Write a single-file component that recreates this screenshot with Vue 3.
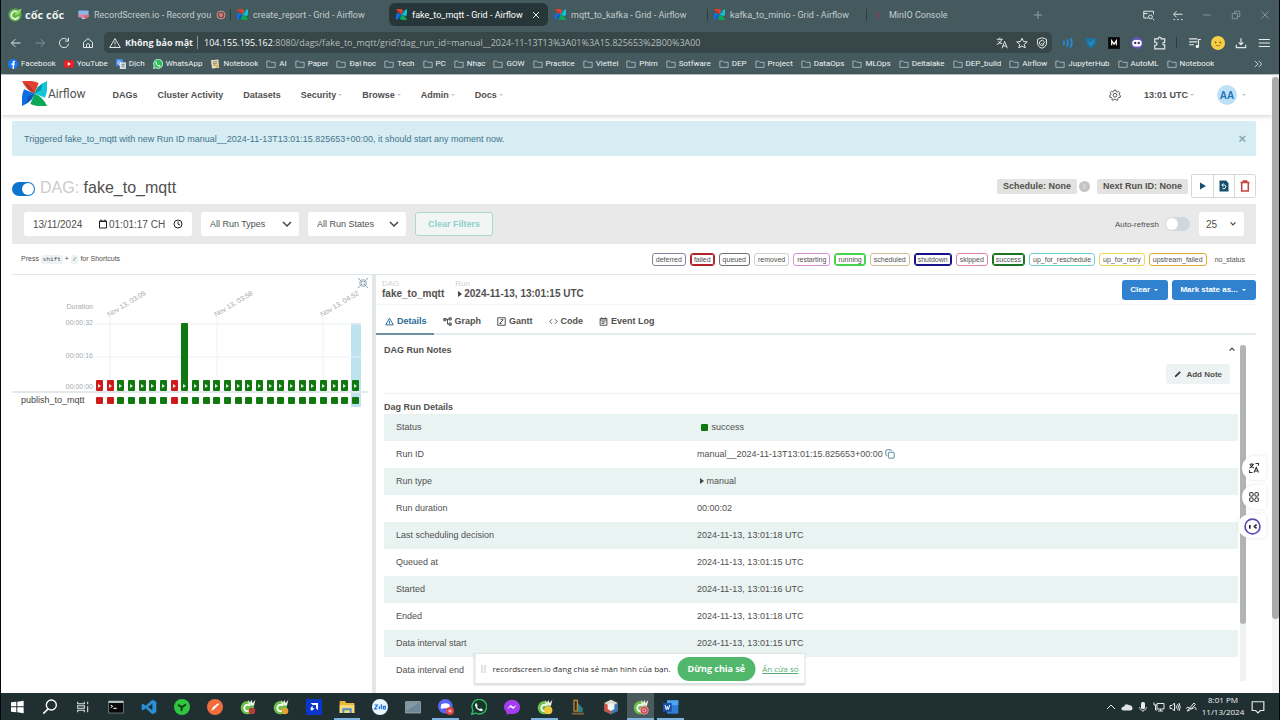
<template>
  <div class="desktop">
    <header class="browser">
      <div class="tab-strip">
        <div class="brand">
          <svg class="brand-icon" viewBox="0 0 14 14">
            <circle cx="7" cy="7" r="6.5" fill="#5fb544" />
            <path d="M10.2 5A3.8 3.8 0 1 0 10.6 8.6" fill="none" stroke="#e6f5df" stroke-width="1.8" />
            <path d="M7 7.5Q8 2.5 13.6 0.6Q13 6 7 7.5Z" fill="#9bdc6c" />
          </svg>
          <span>cốc cốc</span>
        </div>
        <a
          v-for="tab in browserTabs"
          :key="tab.title"
          href="#"
          class="browser-tab"
          :class="{ active: tab.active, divided: tab.divided }"
        >
          <svg class="favicon" viewBox="0 0 24 24" v-html="art[tab.icon]"></svg>
          <span class="browser-tab-title">{{ tab.title }}</span>
          <svg v-if="tab.recording" class="tab-mark" viewBox="0 0 10 10">
            <circle cx="5" cy="5" r="4" fill="none" stroke="#d98c84" />
            <circle cx="5" cy="5" r="2.2" fill="#ee6a5e" />
          </svg>
          <svg v-if="tab.active" class="tab-mark" viewBox="0 0 10 10">
            <path d="M2 2L8 8M8 2L2 8" stroke="#dfe6e6" />
          </svg>
        </a>
        <button class="bare new-tab" aria-label="New tab">
          <svg class="icon-10" viewBox="0 0 10 10"><path d="M5 1V9M1 5H9" stroke="#92a2a4" /></svg>
        </button>
        <div class="window-controls">
          <button v-for="c in windowControls" :key="c.name" class="bare" :aria-label="c.name">
            <svg class="icon-12 line" :class="{ dim: c.dim }" viewBox="0 0 16 16"><path :d="c.d" /></svg>
          </button>
        </div>
      </div>

      <div class="address-row">
        <div class="nav-buttons">
          <button v-for="b in navButtons" :key="b.name" class="bare" :aria-label="b.name">
            <svg class="icon-12 line" :class="{ dim: b.dim }" viewBox="0 0 16 16"><path :d="b.d" /></svg>
          </button>
        </div>
        <div class="address">
          <svg class="icon-12 line" viewBox="0 0 16 16"><path d="M8 2L15 14H1ZM8 6V10M8 11.5V12.8" /></svg>
          <b>Không bảo mật</b>
          <span class="url"><em>104.155.195.162</em>:8080/dags/fake_to_mqtt/grid?dag_run_id=manual__2024-11-13T13%3A01%3A15.825653%2B00%3A00</span>
          <button v-for="a in addressActions" :key="a.name" class="bare" :aria-label="a.name">
            <svg class="icon-12 line" viewBox="0 0 16 16"><path :d="a.d" /></svg>
          </button>
        </div>
        <div class="extensions">
          <button v-for="e in extensions" :key="e" class="bare" :class="e" :aria-label="e">
            <svg class="icon-14" viewBox="0 0 24 24" v-html="art[e]"></svg>
          </button>
        </div>
      </div>

      <nav class="bookmarks">
        <a v-for="(mark, i) in bookmarks" :key="i" href="#">
          <svg class="icon-10" viewBox="0 0 24 24" v-html="art[mark.icon || 'folder']"></svg>
          <span>{{ mark.name }}</span>
        </a>
        <button class="bare more" aria-label="More bookmarks">
          <svg class="icon-10 line" viewBox="0 0 16 16"><path d="M3 3L8 8L3 13M9 3L14 8L9 13" /></svg>
        </button>
      </nav>
    </header>

    <div class="page">
      <div class="document">
        <nav class="navbar">
          <a href="#" class="logo">
            <svg viewBox="0 0 24 24" v-html="art.airflow"></svg>
            <span>Airflow</span>
          </a>
          <a v-for="item in menu" :key="item.name" href="#" class="menu-link">
            {{ item.name }}<i v-if="item.caret" class="caret"></i>
          </a>
          <div class="nav-right">
            <button class="bare" aria-label="Settings">
              <svg class="icon-12 gear" viewBox="0 0 16 16">
                <path d="M6.8 1.5H9.2L9.6 3.4L11.2 4.1L12.9 3.1L14.5 4.9L13.4 6.5L13.9 8.2L15.4 9L14.8 11.2L12.8 11.3L11.7 12.7L12 14.5L9.8 15L8.8 13.4H7.2L6 15L3.9 14.4L4.2 12.5L3.2 11.2L1.2 11L.7 8.8L2.2 8L2.6 6.4L1.6 4.8L3.2 3.1L4.9 4L6.4 3.4Z" />
                <circle cx="8" cy="8.3" r="2.5" />
              </svg>
            </button>
            <a href="#" class="menu-link">13:01 UTC<i class="caret"></i></a>
            <a href="#" class="user"><span class="avatar">AA</span><i class="caret"></i></a>
          </div>
        </nav>

        <main>
          <div class="alert">
            <span>Triggered fake_to_mqtt with new Run ID manual__2024-11-13T13:01:15.825653+00:00, it should start any moment now.</span>
            <button class="bare close" aria-label="Close">×</button>
          </div>

          <div class="title-row">
            <label class="switch">
              <input v-model="dagOn" type="checkbox" aria-label="DAG on">
              <span></span>
            </label>
            <h1><span>DAG:</span> fake_to_mqtt</h1>
            <span class="label">Schedule: None</span>
            <span class="info">i</span>
            <span class="label">Next Run ID: None</span>
            <div class="button-group">
              <button aria-label="Trigger DAG">
                <svg class="icon-12" viewBox="0 0 12 12"><path d="M3 2.5L9 6L3 9.5Z" fill="#17506f" /></svg>
              </button>
              <button aria-label="Reparse DAG">
                <svg class="icon-12" viewBox="0 0 12 12">
                  <path d="M1.5 0.5H8L10.5 3V11.5H1.5Z" fill="#17506f" />
                  <path d="M4 5H6.5A1.9 1.9 0 1 1 4.4 8M5.4 3.4L3.8 5L5.4 6.6" fill="none" stroke="#fff" />
                </svg>
              </button>
              <button aria-label="Delete DAG">
                <svg class="icon-12" viewBox="0 0 12 12">
                  <path d="M1.5 2.5H10.5M4.3 2V1H7.7V2M2.7 3V11H9.3V3" fill="none" stroke="#c9443c" stroke-width="1.5" />
                </svg>
              </button>
            </div>
          </div>

          <div class="filters">
            <div class="datetime">
              <input v-model="filterDate" class="date" type="text" aria-label="Date">
              <svg class="icon-10" viewBox="0 0 10 10"><path d="M1.5 2H8.5V9H1.5ZM1 2.5H9M3 0.5V2M7 0.5V2" fill="none" stroke="#222" /></svg>
              <input v-model="filterTime" class="time" type="text" aria-label="Time">
              <svg class="icon-10" viewBox="0 0 10 10"><circle cx="5" cy="5" r="4" fill="none" stroke="#222" /><path d="M5 2.5V5L7 6" fill="none" stroke="#222" /></svg>
            </div>
            <div class="select">
              <select aria-label="Run types"><option>All Run Types</option></select>
              <svg class="icon-10 chevron" viewBox="0 0 10 10"><path d="M1 3L5 7L9 3" /></svg>
            </div>
            <div class="select">
              <select aria-label="Run states"><option>All Run States</option></select>
              <svg class="icon-10 chevron" viewBox="0 0 10 10"><path d="M1 3L5 7L9 3" /></svg>
            </div>
            <button class="clear-filters">Clear Filters</button>
            <label class="auto-refresh">
              Auto-refresh
              <span class="refresh-toggle"><input v-model="autoRefresh" type="checkbox"><i></i></span>
            </label>
            <div class="select small">
              <select aria-label="Number of runs"><option>25</option></select>
              <svg class="icon-8 chevron" viewBox="0 0 10 10"><path d="M2 3L5 6L8 3" /></svg>
            </div>
          </div>

          <div class="legend">
            <p>Press <kbd>shift</kbd> + <kbd>/</kbd> for Shortcuts</p>
            <span v-for="state in states" :key="state" class="state" :class="state">{{ state }}</span>
          </div>

          <div class="split">
            <section class="grid-panel">
              <svg class="chart" width="360" height="133" viewBox="0 0 360 133">
                <rect class="selected" x="339" y="48" width="10" height="84" />
                <path class="guide" d="M84 49H349M84 82H349M98 42V106M205 42V106M311 42V106" />
                <path class="axis" d="M0 117H356" />
                <text class="tick" x="81" y="34">Duration</text>
                <text class="tick" x="81" y="50">00:00:32</text>
                <text class="tick" x="81" y="83">00:00:16</text>
                <text class="tick" x="81" y="114">00:00:00</text>
                <text
                  v-for="label in dateLabels"
                  :key="label.text"
                  class="date-label"
                  :transform="`translate(${label.x} 42) rotate(-31)`"
                >{{ label.text }}</text>
                <g v-for="run in runs" :key="run.x" :class="run.state">
                  <rect :x="run.x" :y="run.top" width="7" :height="116 - run.top" rx="1" />
                  <path :d="`M${run.x + 2} 109L${run.x + 5} 111L${run.x + 2} 113Z`" fill="#dcecdc" />
                  <rect :x="run.x" y="122" width="7" height="7" rx="1" />
                </g>
                <text class="task" x="9" y="128">publish_to_mqtt</text>
              </svg>
              <button class="bare collapse" aria-label="Collapse">
                <svg class="icon-10" viewBox="0 0 10 10"><path d="M0 0L4 4M4 1V4H1M10 0L6 4M6 1V4H9M0 10L4 6M1 6H4V9M10 10L6 6M9 6H6V9" fill="none" stroke="#8fa3b2" /></svg>
              </button>
            </section>

            <section class="details-panel">
              <div class="run-header">
                <div class="crumb"><small>DAG</small><b>fake_to_mqtt</b></div>
                <div class="crumb"><small>Run</small><b><i class="play"></i>2024-11-13, 13:01:15 UTC</b></div>
                <button class="primary">Clear <i class="caret"></i></button>
                <button class="primary">Mark state as... <i class="caret"></i></button>
              </div>

              <div class="tabs">
                <button
                  v-for="tab in detailTabs"
                  :key="tab.name"
                  :class="{ active: activeTab === tab.name }"
                  @click="activeTab = tab.name"
                >
                  <svg class="tab-icon" viewBox="0 0 12 12"><path :d="tab.d" /></svg>
                  {{ tab.name }}
                </button>
              </div>

              <div class="scroll-area">
                <div class="scroll-content">
                  <div class="notes-head">
                    <h2>DAG Run Notes</h2>
                    <svg class="icon-8 chevron" viewBox="0 0 10 10"><path d="M2 7L5 4L8 7" /></svg>
                  </div>
                  <div class="notes-body">
                    <button class="add-note">
                      <svg class="icon-8" viewBox="0 0 10 10"><path d="M1 9L1.5 7L7 1.5L8.5 3L3 8.5Z" fill="#333" /></svg>
                      Add Note
                    </button>
                  </div>
                  <h2 class="details-title">Dag Run Details</h2>
                  <table>
                    <tbody>
                      <tr v-for="row in details" :key="row.name">
                        <th scope="row">{{ row.name }}</th>
                        <td>
                          <i v-if="row.name === 'Status'" class="status-box"></i>
                          <i v-if="row.name === 'Run type'" class="play type"></i>
                          {{ row.value }}
                          <svg v-if="row.copy" class="copy" viewBox="0 0 12 12">
                            <rect x="4" y="4" width="7" height="7" rx="1" />
                            <path d="M2.5 8H2A1 1 0 0 1 1 7V2A1 1 0 0 1 2 1H7A1 1 0 0 1 8 2V2.5" />
                          </svg>
                        </td>
                      </tr>
                    </tbody>
                  </table>
                </div>
                <div class="inner-bar"><i></i></div>
              </div>
            </section>
          </div>
        </main>
      </div>
      <div class="page-bar"><i></i></div>

      <div class="side-tools">
        <button aria-label="Translate">
          <svg class="icon-12 dark" viewBox="0 0 16 16"><path d="M2 3H8M5 1.5V3M7 3Q6 7 2 8M3 4Q5 7 8 8M8 14L11 7L14 14M9 12H13M10 2H14V5M2 11V14H6" /></svg>
        </button>
        <button aria-label="Apps">
          <svg class="icon-12 dark" viewBox="0 0 16 16"><circle cx="4.5" cy="4.5" r="2.5" /><circle cx="11.5" cy="4.5" r="2.5" /><circle cx="4.5" cy="11.5" r="2.5" /><circle cx="11.5" cy="11.5" r="2.5" /></svg>
        </button>
        <button class="assistant" aria-label="Assistant">
          <svg viewBox="0 0 16 16">
            <circle cx="8" cy="8" r="7" fill="#fff" stroke="#5b4bb5" stroke-width="1.6" />
            <path d="M5.5 6.5V10M11.8 6.3L9.8 8L11.8 9.7" fill="none" stroke="#1d1d33" stroke-width="1.5" />
          </svg>
        </button>
      </div>

      <div class="share-bar">
        <i class="grip"></i>
        <span>recordscreen.io đang chia sẻ màn hình của bạn.</span>
        <button>Dừng chia sẻ</button>
        <a href="#">Ẩn cửa sổ</a>
      </div>
    </div>

    <footer class="taskbar">
      <div class="apps">
        <button v-for="app in apps" :key="app.name" :class="{ open: app.open, current: app.current }" :aria-label="app.name">
          <svg class="app-icon" viewBox="0 0 24 24" v-html="art[app.icon]"></svg>
        </button>
      </div>
      <div class="tray">
        <svg v-for="t in tray" :key="t" class="icon-12" viewBox="0 0 24 24" v-html="art[t]"></svg>
        <div class="clock"><span>8:01 PM</span><span>11/13/2024</span></div>
        <svg class="icon-14" viewBox="0 0 24 24" v-html="art.notice"></svg>
      </div>
    </footer>
  </div>
</template>

<script setup>
import { ref } from 'vue'

const coccoc = '<circle cx="11" cy="13" r="10" fill="#6abf4b"/><path d="M15 10A5 5 0 1 0 15 17" fill="none" stroke="#f3fbef" stroke-width="3"/><path d="M12 1L15 6L17 1L19 6L23 1L21 10L13 9Z" fill="#e8f3df"/>'
const stroke = 'fill="none" stroke="#e4e9e9" stroke-width="2"'

// 图标
const art = {
  airflow: '<path d="M0 0Q10 -1 16 2L12 12Q4 9 0 0Z" fill="#e0402f"/><path d="M24 0Q25 10 22 16L12 12Q15 4 24 0Z" fill="#13c5d6"/><path d="M12 12L15 6L20 2L18 9Z" fill="#0597a9"/><path d="M24 24Q14 25 8 22L12 12Q20 15 24 24Z" fill="#0aa957"/><path d="M0 24Q-1 14 2 8L12 12Q9 20 0 24Z" fill="#0d6fe0"/><path d="M12 12L8 5L3 2L6 8Z" fill="#b8352c"/><path d="M12 12L9 18L4 22L6 15Z" fill="#0b55b5"/>',
  recordscreen: '<rect x="1" y="3" width="22" height="15" rx="2" fill="#8eb6e8"/><rect x="1" y="12" width="22" height="6" fill="#d583a0"/><path d="M8 18H16V22H8Z" fill="#b9c6dd"/><circle cx="17" cy="17" r="4" fill="#e55f66"/>',
  minio: '<path d="M15 2L8 14H12V22L14 20V13L12 12Z" fill="#9c3552"/>',
  folder: '<path d="M2 5H9L12 8H22V20H2Z" fill="none" stroke="#b4c0c1" stroke-width="2"/>',
  facebook: '<circle cx="12" cy="12" r="12" fill="#1877f2"/><path d="M11 24V14H8V10.500H11V8Q11 4 15 4H17V7.500H15.500Q14.500 7.500 14.500 9V10.500H17L16.500 14H14.500V24Z" fill="#fff"/>',
  youtube: '<rect y="3" width="24" height="18" rx="4" fill="#e62127"/><path d="M9 8L17 12L9 16Z" fill="#fff"/>',
  translate: '<rect width="17" height="17" rx="2" fill="#4a88ea"/><rect x="9" y="8" width="15" height="16" rx="2" fill="#d7dde6"/><path d="M11 6A4 4 0 1 0 12 10H8" fill="none" stroke="#fff" stroke-width="2"/><path d="M13 13H21M17 11V13M20 13Q18 19 14 20M14 14Q17 19 21 20" fill="none" stroke="#66788c" stroke-width="1.500"/>',
  whatsapp: '<path d="M1 23L3 17A11 11 0 1 1 7 21Z" fill="#29c259" stroke="#eafbef" stroke-width="2"/><path d="M8 6L10 10L9 12Q11 15 13 15L15 14L18 16Q17 19 14 18Q7 16 6 9Q6 7 8 6Z" fill="#fff"/>',
  notebook: '<path d="M2 3L20 1L22 21L5 23Z" fill="#e9dfbf"/><path d="M6 7L17 6M7 11L18 10M7 15L14 14" stroke="#8a7a55" stroke-width="2"/><circle cx="17" cy="17" r="4" fill="#d7b45a"/>',
  waves: '<path d="M4 8Q7 12 4 16M10 6Q14 12 10 18M16 4Q21 12 16 20" fill="none" stroke="#2789d8" stroke-width="3"/>',
  adblock: '<path d="M3 4H21Q21 17 12 21Q3 17 3 4Z" fill="#1875a8"/><path d="M8 10L12 15L17 8" stroke="#3b94c4" stroke-width="2" fill="none"/>',
  medium: '<rect x="2" y="2" width="20" height="20" fill="#080808"/><path d="M8 16V8L12 14L16 8V16" fill="none" stroke="#fff" stroke-width="2"/>',
  bot: '<circle cx="12" cy="12" r="10" fill="#6a56c9"/><rect x="4" y="7" width="16" height="11" rx="5" fill="#fff"/><circle cx="9" cy="12" r="2" fill="#32245e"/><circle cx="15" cy="12" r="2" fill="#32245e"/>',
  puzzle: `<path d="M3 5H9Q9 1 12 2Q14 2 14 5H20V11Q17 10 17 13Q17 16 20 15V22H3V16Q7 16 7 13Q7 10 3 11Z" ${stroke}/>`,
  playlist: `<path d="M2 5H16M2 10H16M2 15H10M18 18V6H22" ${stroke}/><circle cx="16" cy="18" r="3" fill="#e4e9e9"/>`,
  smiley: '<circle cx="12" cy="12" r="12" fill="#f7cf45"/><circle cx="8" cy="11" r="1.500" fill="#7a5316"/><circle cx="16" cy="11" r="1.500" fill="#7a5316"/><path d="M8 16Q12 18 16 16" fill="none" stroke="#a86f1b" stroke-width="1.500"/>',
  download: `<path d="M12 4V15M8 11L12 15L16 11M4 15V20H20V15" ${stroke}/>`,
  burger: `<path d="M3 6H22M3 12H22M3 18H22" ${stroke}/>`,
  windows: '<path d="M3 5L11 4V11H3ZM12.500 4L22 2.500V11H12.500ZM3 12.500H11V20L3 19ZM12.500 12.500H22V21.500L12.500 20Z" fill="#fff"/>',
  search: '<circle cx="14" cy="9" r="7.500" fill="none" stroke="#fff" stroke-width="2"/><path d="M9 15L2 22" stroke="#fff" stroke-width="2.500"/>',
  taskview: '<path d="M4 4V7H14V4M4 20V17H14V20M4 10H14V14H4ZM19 4V8M19 11V20" fill="none" stroke="#dde3e3" stroke-width="1.600"/>',
  terminal: '<rect x="1" y="3" width="22" height="18" fill="#0a0a0a" stroke="#8d9798"/><rect x="1" y="3" width="22" height="3" fill="#b8c0c1"/><path d="M4 9L7 11L4 13M8 14H13" fill="none" stroke="#fff" stroke-width="1.500"/>',
  vscode: '<path d="M17 1L23 4V20L17 23L7 14L3 17L1 16V8L3 7L7 10ZM17 7L10.500 12L17 17Z" fill="#2a8fd6" fill-rule="evenodd"/>',
  greenapp: '<circle cx="12" cy="12" r="12" fill="#31c63f"/><path d="M6 9L12 12L18 8M12 12L11 18" fill="none" stroke="#0c4a1b" stroke-width="3"/>',
  postman: '<circle cx="12" cy="12" r="12" fill="#f26b3a"/><path d="M6 18L9 12L17 6L18 8L11 15Z" fill="#fff"/>',
  coccocRed: coccoc + '<circle cx="18" cy="18" r="5" fill="#b83a35"/>',
  coccocOrange: coccoc + '<circle cx="18" cy="18" r="5" fill="#e7a02c"/>',
  coccocYellow: coccoc + '<circle cx="17" cy="17" r="6" fill="#f3c53c"/>',
  coccocRec: coccoc + '<circle cx="17" cy="17" r="6" fill="#d33a48" stroke="#f2c6c9"/><circle cx="17" cy="17" r="2.500" fill="none" stroke="#fff"/>',
  blueapp: '<rect width="24" height="24" fill="#0a37c9"/><path d="M7 6H18V17L15 14V9H10ZM7 13L10 10V14H13L10 17H7Z" fill="#fff"/>',
  explorer: '<path d="M1 3H9L11 6H23V21H1Z" fill="#e9b73c"/><rect x="1" y="9" width="22" height="12" fill="#f7da7c"/><path d="M5 14H19V21H16V17H8V21H5Z" fill="#4d8fc4"/>',
  zalo: '<circle cx="12" cy="12" r="12" fill="#e9f3fd"/><path d="M4 9H8L4 15H8M11 11V15M14 8V15M17 11H20V15H17Z" fill="none" stroke="#1273d8" stroke-width="1.800"/>',
  monitor: '<rect x="1" y="4" width="22" height="17" fill="#6f8796" stroke="#aebbc2"/><path d="M2 5H22L2 18Z" fill="#8299a6"/>',
  discord: '<circle cx="11" cy="11" r="11" fill="#5865f2"/><path d="M5 8Q11 5 17 8L18 14L15 15L14 14H8L7 15L4 14Z" fill="#fff"/><circle cx="18" cy="18" r="6" fill="#e0413f"/><path d="M15 18H21M18 15V21" stroke="#fff"/>',
  whatsappDark: '<path d="M1 23L3 17A11 11 0 1 1 7 21Z" fill="#17362c" stroke="#2fbf62" stroke-width="2"/><path d="M8 6L10 10L9 12Q11 15 13 15L15 14L18 16Q17 19 14 18Q7 16 6 9Q6 7 8 6Z" fill="#e9f6ed"/>',
  messenger: '<path d="M12 1C5 1 0 6 0 12Q0 17 4 20V24L8 22Q24 25 24 12C24 6 19 1 12 1Z" fill="#a63df0"/><path d="M5 15L10 9L14 12L19 9L14 15L10 12Z" fill="#fff"/>',
  chart: '<path d="M5 1H12V19H5Z" fill="#c78632"/><path d="M7 3H10V17H7Z" fill="#203032"/><path d="M12 6L19 14V20H12Z" fill="#2f7f83"/><path d="M3 22H21" stroke="#7d6034" stroke-width="3"/>',
  cube: '<path d="M12 1L22 6V18L12 23L2 18V6Z" fill="#5a9e46"/><path d="M12 1L22 6L12 12L2 6Z" fill="#d9dccb"/><path d="M2 6L12 12V23L2 18Z" fill="#cf5147"/><path d="M12 12L22 6V18L12 23Z" fill="#3e77b8"/><path d="M12 6L17 9V15L12 18L7 15V9Z" fill="#f4f4f4"/>',
  word: '<rect x="6" y="2" width="17" height="20" fill="#2f7fd8"/><rect x="6" y="2" width="17" height="7" fill="#53a4ee"/><rect x="0" y="6" width="13" height="13" fill="#1650a8"/><path d="M3 9L5 16L6.500 11L8 16L10 9" fill="none" stroke="#fff" stroke-width="1.500"/>',
  up: `<path d="M4 16L12 8L20 16" ${stroke}/>`,
  cloud: '<path d="M6 19Q0 19 1 14Q2 11 6 11Q9 4 15 8Q22 8 23 14Q23 19 18 19Z" fill="#dfe4e4"/>',
  mic: '<rect x="8" y="2" width="8" height="14" rx="3" fill="#e6eaea"/><path d="M5 12Q5 19 12 19Q19 19 19 12M12 19V22" fill="none" stroke="#b9c2c2" stroke-width="2"/>',
  network: `<path d="M8 5H22V16H8ZM15 16V20M10 20H20M2 3V8H8M5 8V18H8" ${stroke}/>`,
  sound: `<path d="M2 9H6L11 4V20L6 15H2ZM14 9Q16 12 14 15M17 6Q21 12 17 18M20 4Q25 12 20 20" ${stroke}/>`,
  pen: `<path d="M4 20L18 4L21 7L8 19ZM2 15Q6 10 9 14T17 14T22 18" ${stroke}/>`,
  notice: `<path d="M2 3H22V18H16L12 22L8 18H2Z" ${stroke}/>`
}

const browserTabs = [
  { title: 'RecordScreen.io - Record you', icon: 'recordscreen', recording: true },
  { title: 'create_report - Grid - Airflow', icon: 'airflow', divided: true },
  { title: 'fake_to_mqtt - Grid - Airflow', icon: 'airflow', active: true },
  { title: 'mqtt_to_kafka - Grid - Airflow', icon: 'airflow' },
  { title: 'kafka_to_minio - Grid - Airflow', icon: 'airflow', divided: true },
  { title: 'MinIO Console', icon: 'minio', divided: true }
]

const windowControls = [
  { name: 'Search tabs', d: 'M14 7V3H1V12H7M1 6H6M13 13L15 15M12.500 10.500A2.500 2.500 0 1 1 7.500 10.500A2.500 2.500 0 1 1 12.500 10.500' },
  { name: 'Reopen', d: 'M14 7H3M6 3L2 7L6 11M2 14H4M7 14H9M12 14H14' },
  { name: 'Minimize', d: 'M3 8H13', dim: true },
  { name: 'Restore', d: 'M3 6H10V13H3ZM6 6V3H13V10H10', dim: true },
  { name: 'Close', d: 'M3 3L13 13M13 3L3 13', dim: true }
]

const navButtons = [
  { name: 'Back', d: 'M14 8H2M7 3L2 8L7 13' },
  { name: 'Forward', d: 'M2 8H14M9 3L14 8L9 13', dim: true },
  { name: 'Reload', d: 'M13.500 5A6.200 6.200 0 1 0 14.200 9M14 1V5.500H9.500' },
  { name: 'Home', d: 'M2 7L8 2L14 7V14H2ZM6 14V10Q8 7 10 10V14' }
]

const addressActions = [
  { name: 'Translate page', d: 'M1 3H9M5 1V3M8 3Q6 9 1 10M3 5Q5 9 8 9M8 15L11.500 6L15 15M9 12H14' },
  { name: 'Bookmark', d: 'M8 1.500L10 6L15 6.500L11 9.800L12.300 14.500L8 12L3.700 14.500L5 9.800L1 6.500L6 6Z' },
  { name: 'Protection', d: 'M8 1L14 3V8Q14 13 8 15Q2 13 2 8V3ZM11 6A3.500 3.500 0 1 0 11 10M7 8L9 10L12 6' }
]

const extensions = ['waves', 'adblock', 'medium', 'bot', 'puzzle', 'playlist', 'smiley', 'download', 'burger']

const bookmarks = [
  { name: 'Facebook', icon: 'facebook' },
  { name: 'YouTube', icon: 'youtube' },
  { name: 'Dịch', icon: 'translate' },
  { name: 'WhatsApp', icon: 'whatsapp' },
  { name: 'Notebook', icon: 'notebook' },
  { name: 'AI' },
  { name: 'Paper' },
  { name: 'Đại học' },
  { name: 'Tech' },
  { name: 'PC' },
  { name: 'Nhạc' },
  { name: 'GOW' },
  { name: 'Practice' },
  { name: 'Viettel' },
  { name: 'Phim' },
  { name: 'Sotfware' },
  { name: 'DEP' },
  { name: 'Project' },
  { name: 'DataOps' },
  { name: 'MLOps' },
  { name: 'Deltalake' },
  { name: 'DEP_build' },
  { name: 'Airflow' },
  { name: 'JupyterHub' },
  { name: 'AutoML' },
  { name: 'Notebook' }
]

const menu = [
  { name: 'DAGs' },
  { name: 'Cluster Activity' },
  { name: 'Datasets' },
  { name: 'Security', caret: true },
  { name: 'Browse', caret: true },
  { name: 'Admin', caret: true },
  { name: 'Docs', caret: true }
]

const dagOn = ref(true)
const autoRefresh = ref(false)
const filterDate = ref('13/11/2024')
const filterTime = ref('01:01:17 CH')

const states = [
  'deferred', 'failed', 'queued', 'removed', 'restarting', 'running', 'scheduled', 'shutdown',
  'skipped', 'success', 'up_for_reschedule', 'up_for_retry', 'upstream_failed', 'no_status'
]

// 运行记录
const failedRuns = [0, 1, 7]
const runs = Array.from({ length: 25 }, (_, i) => ({
  x: 84 + Math.round((i * 32) / 3),
  top: i === 8 ? 48 : 105,
  state: failedRuns.includes(i) ? 'run-failed' : 'run-success'
}))

const dateLabels = [
  { text: 'Nov 13, 03:05', x: 97 },
  { text: 'Nov 13, 03:58', x: 204 },
  { text: 'Nov 13, 04:52', x: 310 }
]

const activeTab = ref('Details')
const detailTabs = [
  { name: 'Details', d: 'M6 1.500L11 10.500H1ZM6 5V8M6 8.500V9.500' },
  { name: 'Graph', d: 'M1 2H4V5H1ZM8 1H11V4H8ZM8 8H11V11H8ZM4 3H8M6 3V9.500H8M1.500 3.500H3.500M8.500 2.500H10.500M8.500 9.500H10.500' },
  { name: 'Gantt', d: 'M1 1H11V11H1ZM3.500 8.500L8 4M5 3.500H8.500M3.500 8.500H6' },
  { name: 'Code', d: 'M4 3L1 6L4 9M8 3L11 6L8 9' },
  { name: 'Event Log', d: 'M1.500 2H10.500V11H1.500ZM1.500 4H10.500M3.500 0.500V2M8.500 0.500V2M3.500 6.500H8.500M3.500 8.500H7' }
]

const details = [
  { name: 'Status', value: 'success' },
  { name: 'Run ID', value: 'manual__2024-11-13T13:01:15.825653+00:00', copy: true },
  { name: 'Run type', value: 'manual' },
  { name: 'Run duration', value: '00:00:02' },
  { name: 'Last scheduling decision', value: '2024-11-13, 13:01:18 UTC' },
  { name: 'Queued at', value: '2024-11-13, 13:01:15 UTC' },
  { name: 'Started', value: '2024-11-13, 13:01:16 UTC' },
  { name: 'Ended', value: '2024-11-13, 13:01:18 UTC' },
  { name: 'Data interval start', value: '2024-11-13, 13:01:15 UTC' },
  { name: 'Data interval end', value: '' }
]

const apps = [
  { name: 'Start', icon: 'windows' },
  { name: 'Search', icon: 'search' },
  { name: 'Task View', icon: 'taskview' },
  { name: 'Terminal', icon: 'terminal' },
  { name: 'VS Code', icon: 'vscode' },
  { name: 'Cortex', icon: 'greenapp' },
  { name: 'Postman', icon: 'postman' },
  { name: 'Browser profile 1', icon: 'coccocRed' },
  { name: 'Browser profile 2', icon: 'coccocOrange' },
  { name: 'Adrenalin', icon: 'blueapp' },
  { name: 'File Explorer', icon: 'explorer', open: true },
  { name: 'Zalo', icon: 'zalo' },
  { name: 'Display', icon: 'monitor' },
  { name: 'Discord', icon: 'discord', open: true },
  { name: 'WhatsApp', icon: 'whatsappDark' },
  { name: 'Messenger', icon: 'messenger' },
  { name: 'Browser profile 3', icon: 'coccocYellow', open: true },
  { name: 'Charts', icon: 'chart' },
  { name: 'Cube', icon: 'cube' },
  { name: 'Browser recording', icon: 'coccocRec', open: true, current: true },
  { name: 'Word', icon: 'word', open: true }
]

const tray = ['up', 'cloud', 'mic', 'network', 'sound', 'pen']
</script>

<style>
body {
  margin: 0;
  background: #000;
}
</style>

<style scoped>
* {
  box-sizing: border-box;
}

.desktop {
  height: 100vh;
  display: flex;
  flex-direction: column;
  border: solid #050808;
  border-width: 0 1px;
  font-family: "Liberation Sans", Arial, sans-serif;
  font-size: 9px;
  color: #51504f;
}

button,
input,
select {
  font: inherit;
  color: inherit;
}

a {
  color: inherit;
  text-decoration: none;
}

.bare {
  display: flex;
  align-items: center;
  justify-content: center;
  padding: 0;
  border: none;
  background: none;
}

svg {
  flex: none;
  display: block;
}

.icon-8 { width: 8px; height: 8px; }
.icon-10 { width: 10px; height: 10px; }
.icon-12 { width: 12px; height: 12px; }
.icon-14 { width: 14px; height: 14px; }

.line {
  fill: none;
  stroke: #e4e9e9;
  stroke-width: 1.3;
}

.line.dim {
  stroke: #84979a;
}

.dark {
  fill: none;
  stroke: #333;
  stroke-width: 1.4;
}

/* browser */
.browser {
  background: #455a5e;
  color: #eef2f2;
  font-family: "Open Sans", "Noto Sans", sans-serif;
  border-bottom: 1px solid #b9c8cf;
}

.tab-strip {
  display: flex;
  height: 29px;
}

.brand {
  display: flex;
  align-items: center;
  gap: 3px;
  width: 70px;
  padding-left: 7px;
  font-size: 11px;
  font-weight: 700;
}

.brand-icon {
  width: 14px;
  height: 14px;
}

.browser-tab {
  flex: 0 1 159px;
  min-width: 0;
  display: flex;
  align-items: center;
  gap: 5px;
  margin: 3px 0;
  padding: 0 7px;
  border-radius: 6px;
  font-family: Roboto, sans-serif;
  color: #c3cdce;
}

.browser-tab.active {
  background: #273638;
  color: #fff;
}

.browser-tab.divided {
  background: linear-gradient(#2d3e41, #2d3e41) 0 50% / 1px 12px no-repeat;
}

.favicon {
  width: 11px;
  height: 11px;
}

.browser-tab-title {
  flex: 1;
  white-space: nowrap;
}

.tab-mark {
  width: 10px;
  height: 10px;
}

.new-tab {
  width: 26px;
}

.window-controls {
  display: flex;
  gap: 17px;
  margin-left: auto;
  padding-right: 8px;
}

.address-row {
  display: flex;
  align-items: center;
  height: 27px;
}

.nav-buttons {
  display: flex;
  gap: 12px;
  width: 103px;
  padding-left: 9px;
}

.address {
  flex: 1;
  min-width: 0;
  display: flex;
  align-items: center;
  gap: 8px;
  height: 21px;
  padding: 0 4px 0 5px;
  border-radius: 5px;
  background: #374648;
}

.address b {
  margin: 0 -2px 0 -4px;
  font-size: 9px;
  padding-right: 4px;
  border-right: 1px solid #8b9899;
  line-height: 13px;
}

.url {
  flex: 1;
  overflow: hidden;
  white-space: nowrap;
  color: #b3bebf;
}

.url em {
  font-style: normal;
  color: #fff;
}

.extensions {
  display: flex;
  gap: 9px;
  padding: 0 8px 0 9px;
}

.extensions .playlist {
  padding-left: 12px;
  background: linear-gradient(#2d3e41, #2d3e41) 0 50% / 1px 11px no-repeat;
}

.bookmarks {
  display: flex;
  align-items: center;
  gap: 8px;
  height: 18px;
  padding: 0 16px 3px 7px;
  font-family: Roboto, "Noto Sans", sans-serif;
  font-size: 8px;
  white-space: nowrap;
  overflow: hidden;
}

.bookmarks a {
  display: flex;
  align-items: center;
  gap: 3px;
}

.bookmarks .more {
  margin-left: auto;
}

/* page */
.page {
  position: relative;
  flex: 1;
  min-height: 0;
  display: flex;
  background: #fff;
}

.document {
  flex: 1;
  min-width: 0;
  display: flex;
  flex-direction: column;
}

.page-bar {
  width: 7px;
  padding-top: 2px;
  background: #f3f4f4;
}

.page-bar i {
  display: block;
  height: 88%;
  border-radius: 4px;
  background: #a9abac;
}

.navbar {
  display: flex;
  align-items: center;
  gap: 20px;
  height: 40px;
  padding: 0 26px 0 21px;
  font-weight: 700;
  box-shadow: 0 1px 5px rgba(0, 0, 0, 0.2);
}

.logo {
  display: flex;
  align-items: center;
  gap: 1px;
  margin-right: 7px;
  padding-bottom: 3px;
  font-family: Roboto, sans-serif;
  font-size: 12px;
  font-weight: 400;
}

.logo svg {
  width: 25px;
  height: 25px;
}

.menu-link {
  display: flex;
  align-items: center;
  gap: 2px;
}

.caret {
  display: inline-block;
  border: solid transparent;
  border-width: 2px 2px 0;
  border-top-color: #c5c5c5;
}

.nav-right {
  display: flex;
  align-items: center;
  gap: 23px;
  margin-left: auto;
}

.gear {
  fill: none;
  stroke: #51504f;
  stroke-width: 1.3;
}

.user {
  display: flex;
  align-items: center;
  gap: 5px;
}

.avatar {
  display: grid;
  place-items: center;
  width: 20px;
  height: 20px;
  border-radius: 50%;
  background: #bfe1f8;
  color: #1d77b8;
  font-size: 10px;
}

main {
  flex: 1;
  min-height: 0;
  display: flex;
  flex-direction: column;
  padding: 6px 16px 0 11px;
}

.alert {
  display: flex;
  align-items: center;
  justify-content: space-between;
  padding: 0 10px 0 12px;
  min-height: 35px;
  border-radius: 2px;
  background: #d6edf3;
  color: #47748c;
}

.close {
  font-size: 13px;
  font-weight: 700;
  color: #8aa4ad;
}

.title-row {
  display: flex;
  align-items: center;
  margin: 18px 0 6px;
}

.title-row h1 {
  flex: 1;
  margin: 4px 0 0 5px;
  font-size: 16px;
  font-weight: 400;
}

.title-row h1 span {
  color: #cbcbcb;
}

.switch {
  position: relative;
  margin-top: 6px;
  width: 23px;
  height: 14px;
}

.switch input,
.refresh-toggle input {
  position: absolute;
  inset: 0;
  width: 100%;
  height: 100%;
  margin: 0;
  opacity: 0;
}

.switch span {
  display: block;
  height: 14px;
  padding: 1px;
  border-radius: 7px;
  background: #0d74ce;
}

.switch span::after {
  content: "";
  display: block;
  width: 12px;
  height: 12px;
  margin-left: auto;
  border-radius: 50%;
  background: #fff;
}

.label {
  padding: 0 6px;
  border-radius: 2px;
  background: #e2e2e0;
  font-weight: 700;
  line-height: 15px;
}

.info {
  display: grid;
  place-items: center;
  width: 11px;
  height: 11px;
  margin: 0 7px 0 2px;
  border-radius: 50%;
  background: #c4c4c4;
  color: #eee;
  font-size: 8px;
}

.button-group {
  display: flex;
  margin-left: 3px;
  border: 1px solid #d7d7d7;
  border-radius: 2px;
}

.button-group button {
  display: grid;
  place-items: center;
  width: 21px;
  height: 22px;
  padding: 0;
  border: none;
  background: #fff;
}

.button-group button + button {
  border-left: 1px solid #d7d7d7;
}

.filters {
  display: flex;
  align-items: center;
  gap: 9px;
  padding: 8px 12px;
  background: #e9e9e9;
}

.datetime,
.select {
  display: flex;
  align-items: center;
  height: 24px;
  border-radius: 3px;
  background: #fff;
}

.datetime {
  width: 168px;
  padding-left: 9px;
}

.datetime input {
  padding: 0;
  border: none;
  background: none;
  outline: none;
  font-size: 10px;
}

.datetime .date { width: 65px; }

.datetime .time {
  width: 65px;
  padding-left: 1px;
}

.select {
  position: relative;
  width: 98px;
}

.select select {
  width: 100%;
  height: 24px;
  padding: 0 9px;
  border: none;
  background: none;
  appearance: none;
}

.select .chevron {
  position: absolute;
  right: 7px;
  pointer-events: none;
}

.chevron {
  fill: none;
  stroke: #444;
  stroke-width: 1.5;
}

.select.small {
  width: 45px;
}

.select.small select {
  padding: 0 7px;
  font-size: 10px;
}

.clear-filters {
  height: 24px;
  padding: 0 12px;
  border: 1px solid #abd8d4;
  border-radius: 3px;
  background: #f1f5f4;
  color: #8fd2c8;
  font-weight: 700;
}

.auto-refresh {
  display: flex;
  align-items: center;
  gap: 6px;
  margin-left: auto;
  font-size: 8px;
}

.refresh-toggle {
  position: relative;
  width: 25px;
  height: 14px;
  padding: 1px;
  border-radius: 7px;
  background: #cfd8dc;
}

.refresh-toggle i {
  display: block;
  width: 12px;
  height: 12px;
  border-radius: 50%;
  background: #fff;
}

.legend {
  display: flex;
  align-items: center;
  gap: 4px;
  height: 31px;
  padding-right: 7px;
  font-size: 7px;
  border-bottom: 1px solid #dde8ea;
}

.legend p {
  margin: 0 auto 0 9px;
}

kbd {
  padding: 1px 2px;
  background: #edf2f4;
  border-radius: 2px;
  font-family: "Liberation Mono", monospace;
  font-size: 6px;
}

.state {
  padding: 0 3px;
  border: 1px solid transparent;
  border-radius: 3px;
  line-height: 11px;
}

.deferred { border-color: #8783a4; }
.failed { border-color: #b3242a; box-shadow: inset 0 0 0 1px #b3242a; }
.queued { border-color: #6f6f74; }
.removed { border-color: #d0d0d0; }
.restarting { border-color: #d68fd8; }
.running { border-color: #45d34e; box-shadow: inset 0 0 0 1px #45d34e; }
.scheduled { border-color: #cdbf94; }
.shutdown { border-color: #17128c; box-shadow: inset 0 0 0 1px #17128c; }
.skipped { border-color: #dd82ab; }
.success { border-color: #1a7423; box-shadow: inset 0 0 0 1px #1a7423; }
.up_for_reschedule { border-color: #70d5cf; }
.up_for_retry { border-color: #ecd94c; }
.upstream_failed { border-color: #dfae2d; }

.split {
  flex: 1;
  min-height: 0;
  display: flex;
}

.grid-panel {
  position: relative;
  width: 364px;
  border-right: 4px solid #e2e8ea;
}

.collapse {
  position: absolute;
  top: 3px;
  right: 4px;
}

.chart text {
  font-size: 7px;
  fill: #a3a9ad;
}

.chart .tick {
  text-anchor: end;
}

.chart .task {
  font-size: 9px;
  fill: #444;
}

.selected { fill: #bee3ee; }
.guide { fill: none; stroke: #edf1f3; }
.axis { stroke: #e3e9ea; stroke-width: 2; }
.run-failed { fill: #cf1a1c; }
.run-success { fill: #117811; }

.details-panel {
  flex: 1;
  min-width: 0;
  display: flex;
  flex-direction: column;
}

.run-header {
  display: flex;
  align-items: center;
  gap: 8px;
  height: 30px;
  padding-left: 6px;
  border-bottom: 1px solid #f3f5f6;
}

.crumb {
  display: flex;
  flex-direction: column;
  margin-right: 3px;
  line-height: 11px;
}

.crumb small {
  font-size: 8px;
  line-height: 8px;
  color: #cfd2d4;
}

.crumb b {
  font-size: 10px;
}

.crumb:nth-child(2) {
  margin-right: auto;
}

.play {
  display: inline-block;
  margin: 0 2px 0 3px;
  border: solid transparent;
  border-width: 3px 0 3px 4px;
  border-left-color: #444;
}

.primary {
  height: 20px;
  padding: 0 8px;
  border: none;
  border-radius: 3px;
  background: #3182ce;
  color: #fff;
  font-size: 8px;
  font-weight: 700;
}

.primary .caret {
  margin: 0 2px;
  border-top-color: #fff;
  vertical-align: middle;
}

.primary + .primary {
  margin-left: -4px;
}

.tabs {
  display: flex;
  height: 30px;
  border-bottom: 2px solid #e2ebed;
}

.tabs button {
  display: flex;
  align-items: center;
  gap: 3px;
  margin-bottom: -2px;
  padding: 4px 7px 0 9px;
  border: none;
  border-bottom: 2px solid transparent;
  background: none;
  font-weight: 700;
}

.tabs button.active {
  color: #2c6a96;
  border-bottom-color: #6d8f9e;
}

.tab-icon {
  width: 9px;
  height: 9px;
  fill: none;
  stroke: currentColor;
  stroke-width: 1.3;
}

.scroll-area {
  flex: 1;
  min-height: 0;
  display: flex;
  margin-bottom: 12px;
  padding: 10px 10px 0 8px;
}

.scroll-content {
  flex: 1;
  min-width: 0;
  overflow: hidden;
}

.inner-bar {
  width: 6px;
  background: #f1f2f2;
}

.inner-bar i {
  display: block;
  height: 83%;
  border-radius: 3px;
  background: #b2b4b4;
}

h2 {
  margin: 0;
  font-size: 9px;
  line-height: 10px;
}

.notes-head {
  display: flex;
  justify-content: space-between;
  padding-right: 4px;
}

.notes-body {
  display: flex;
  justify-content: flex-end;
  padding: 9px 10px 9px 0;
  border-bottom: 1px solid #eef2f2;
}

.add-note {
  display: flex;
  align-items: center;
  gap: 4px;
  height: 20px;
  padding: 0 8px;
  border: none;
  border-radius: 3px;
  background: #edf3f2;
  font-size: 8px;
  font-weight: 700;
}

.details-title {
  padding: 8px 0 2px;
}

table {
  width: calc(100% - 2px);
  border-collapse: collapse;
}

th,
td {
  height: 27px;
  padding: 0 12px;
  text-align: left;
  font-weight: 400;
  line-height: 11px;
}

th {
  width: 301px;
}

tr:nth-child(odd) {
  background: #e9f3f2;
}

.status-box {
  display: inline-block;
  width: 7px;
  height: 7px;
  margin: 0 1px 0 4px;
  border-radius: 1px;
  background: #117811;
  vertical-align: -1px;
}

.play.type {
  margin-right: 0;
}

.copy {
  display: inline-block;
  width: 10px;
  height: 10px;
  fill: none;
  stroke: #3a7190;
  vertical-align: -2px;
}

/* overlays */
.side-tools {
  position: absolute;
  top: 381px;
  right: 13px;
  display: flex;
  flex-direction: column;
  align-items: flex-end;
  gap: 5px;
}

.side-tools button {
  display: grid;
  place-items: center;
  width: 24px;
  height: 24px;
  padding: 0;
  border: none;
  border-radius: 12px 0 0 12px;
  background: #fff;
  box-shadow: 0 0 3px rgba(0, 0, 0, 0.12);
}

.side-tools .assistant {
  width: 28px;
}

.assistant svg {
  width: 17px;
  height: 17px;
}

.share-bar {
  position: absolute;
  left: 50%;
  bottom: 9px;
  transform: translateX(-50%);
  display: flex;
  align-items: center;
  gap: 7px;
  height: 31px;
  padding: 0 6px;
  border: 1px solid #dfe3e3;
  background: #fff;
  box-shadow: 0 1px 2px rgba(0, 0, 0, 0.2);
  color: #333;
  font-family: "Open Sans", "Noto Sans", sans-serif;
  font-size: 8px;
  white-space: nowrap;
}

.grip {
  width: 4px;
  height: 8px;
  border: solid #c4c8c8;
  border-width: 0 1px;
}

.share-bar button {
  height: 24px;
  padding: 0 10px;
  border: none;
  border-radius: 12px;
  background: #51b86b;
  color: #fff;
  font-size: 9px;
  font-weight: 700;
}

.share-bar a {
  color: #5cae74;
  text-decoration: underline;
}

/* taskbar */
.taskbar {
  display: flex;
  justify-content: space-between;
  height: 27px;
  background: #203032;
}

.apps {
  display: flex;
  flex: 0 1 686px;
}

.apps button {
  flex: 1;
  display: grid;
  place-items: center;
  margin: 0 3px;
  padding: 2px 0 0;
  border: none;
  border-bottom: 2px solid transparent;
  background: none;
}

.apps .open {
  border-bottom-color: #7fb3df;
}

.apps .current {
  margin: 0;
  background: #4b5a5c;
}

.app-icon {
  width: 16px;
  height: 16px;
}

.tray {
  display: flex;
  align-items: center;
  gap: 4px;
  padding-right: 14px;
}

.clock {
  display: flex;
  flex-direction: column;
  align-items: center;
  width: 44px;
  margin-right: 2px;
  padding-bottom: 1px;
  color: #eef2f2;
  font-family: "Open Sans", sans-serif;
  font-size: 8px;
  line-height: 12px;
}
</style>
